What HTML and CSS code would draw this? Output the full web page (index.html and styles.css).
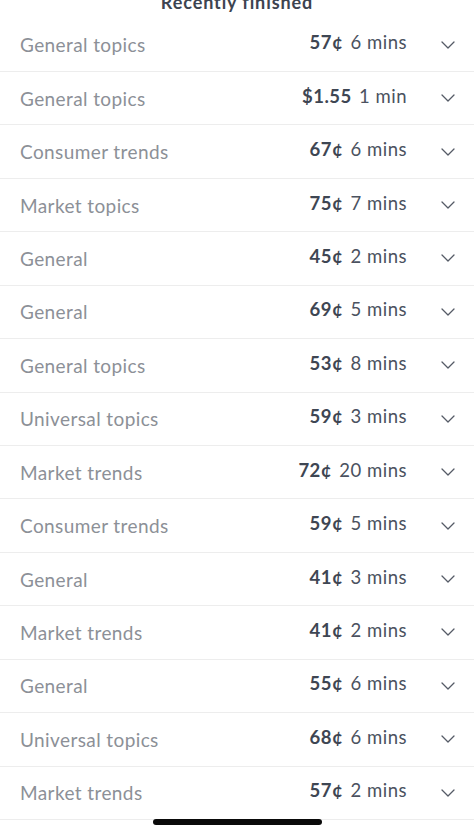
FILE: index.html
```html
<!DOCTYPE html>
<html>
<head>
<meta charset="utf-8">
<link rel="stylesheet" href="styles.css">
</head>
<body>
<div class="screen">
  <header class="header"><h1 class="title">Recently finished</h1></header>
  <ul class="list">
    <li class="row"><span class="label">General topics</span><span class="value"><b class="price">57¢</b> 6 mins</span><svg class="chev" viewBox="0 0 14 8"><path d="M1 1l6 6 6-6"/></svg></li>
    <li class="row"><span class="label">General topics</span><span class="value"><b class="price">$1.55</b> 1 min</span><svg class="chev" viewBox="0 0 14 8"><path d="M1 1l6 6 6-6"/></svg></li>
    <li class="row"><span class="label">Consumer trends</span><span class="value"><b class="price">67¢</b> 6 mins</span><svg class="chev" viewBox="0 0 14 8"><path d="M1 1l6 6 6-6"/></svg></li>
    <li class="row"><span class="label">Market topics</span><span class="value"><b class="price">75¢</b> 7 mins</span><svg class="chev" viewBox="0 0 14 8"><path d="M1 1l6 6 6-6"/></svg></li>
    <li class="row"><span class="label">General</span><span class="value"><b class="price">45¢</b> 2 mins</span><svg class="chev" viewBox="0 0 14 8"><path d="M1 1l6 6 6-6"/></svg></li>
    <li class="row"><span class="label">General</span><span class="value"><b class="price">69¢</b> 5 mins</span><svg class="chev" viewBox="0 0 14 8"><path d="M1 1l6 6 6-6"/></svg></li>
    <li class="row"><span class="label">General topics</span><span class="value"><b class="price">53¢</b> 8 mins</span><svg class="chev" viewBox="0 0 14 8"><path d="M1 1l6 6 6-6"/></svg></li>
    <li class="row"><span class="label">Universal topics</span><span class="value"><b class="price">59¢</b> 3 mins</span><svg class="chev" viewBox="0 0 14 8"><path d="M1 1l6 6 6-6"/></svg></li>
    <li class="row"><span class="label">Market trends</span><span class="value"><b class="price">72¢</b> 20 mins</span><svg class="chev" viewBox="0 0 14 8"><path d="M1 1l6 6 6-6"/></svg></li>
    <li class="row"><span class="label">Consumer trends</span><span class="value"><b class="price">59¢</b> 5 mins</span><svg class="chev" viewBox="0 0 14 8"><path d="M1 1l6 6 6-6"/></svg></li>
    <li class="row"><span class="label">General</span><span class="value"><b class="price">41¢</b> 3 mins</span><svg class="chev" viewBox="0 0 14 8"><path d="M1 1l6 6 6-6"/></svg></li>
    <li class="row"><span class="label">Market trends</span><span class="value"><b class="price">41¢</b> 2 mins</span><svg class="chev" viewBox="0 0 14 8"><path d="M1 1l6 6 6-6"/></svg></li>
    <li class="row"><span class="label">General</span><span class="value"><b class="price">55¢</b> 6 mins</span><svg class="chev" viewBox="0 0 14 8"><path d="M1 1l6 6 6-6"/></svg></li>
    <li class="row"><span class="label">Universal topics</span><span class="value"><b class="price">68¢</b> 6 mins</span><svg class="chev" viewBox="0 0 14 8"><path d="M1 1l6 6 6-6"/></svg></li>
    <li class="row"><span class="label">Market trends</span><span class="value"><b class="price">57¢</b> 2 mins</span><svg class="chev" viewBox="0 0 14 8"><path d="M1 1l6 6 6-6"/></svg></li>
  </ul>
  <div class="home-bar"></div>
</div>
</body>
</html>
```
FILE: styles.css
```css
* { box-sizing: border-box; }
html, body { margin: 0; padding: 0; background: #fff; }
body {
  font-family: "Lato", "Open Sans", sans-serif;
  width: 474px;
  height: 835px;
  overflow: hidden;
}
.screen {
  position: relative;
  height: 835px;
}
.header {
  height: 18.6px;
  display: flex;
  justify-content: center;
  align-items: flex-end;
  overflow: visible;
}
.title {
  margin: 0 0 7px 0;
  font-size: 18px;
  line-height: 20px;
  font-weight: 700;
  color: #3d4450;
  letter-spacing: 0.9px;
}
.list {
  list-style: none;
  margin: 0;
  padding: 0;
}
.row {
  display: flex;
  align-items: center;
  height: 53.43px;
  padding: 0 19px 0 20px;
  border-bottom: 1px solid #ededed;
}
.label {
  flex: 1;
  font-size: 19px;
  color: #8c9097;
  padding-top: 0;
  letter-spacing: 0.4px;
}
.value {
  font-size: 18.5px;
  color: #4b5260;
  margin-right: 34px;
  margin-top: -5px;
  letter-spacing: 0.5px;
}
.price {
  font-weight: 700;
  color: #3e4653;
  margin-right: 2px;
}
.chev {
  width: 14px;
  height: 8px;
  fill: none;
  stroke: #555b66;
  stroke-width: 1.3;
  stroke-linecap: round;
  stroke-linejoin: round;
}
.home-bar {
  position: absolute;
  left: 153px;
  top: 819px;
  width: 169px;
  height: 6px;
  border-radius: 3px;
  background: #0a0a0a;
}
```
